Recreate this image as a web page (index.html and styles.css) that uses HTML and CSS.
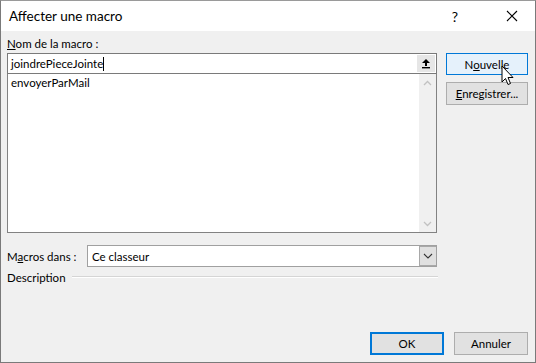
FILE: index.html
```html
<!DOCTYPE html>
<html lang="fr">
<head>
    <meta charset="UTF-8">
    <title>Affecter une macro</title>
    <link rel="stylesheet" href="styles.css">
</head>
<body>
    <div class="window">
        <div class="titlebar">
            <div class="title">Affecter une macro</div>
            <div class="help">?</div>
            <div class="close">
                <svg width="12" height="12" viewBox="0 0 12 12"><path d="M1 1 L11 11 M11 1 L1 11" stroke="#000" stroke-width="1.1" fill="none"/></svg>
            </div>
        </div>

        <div class="content">
            <div class="top">
                <!-- left column: name + list -->
                <div class="left">
                    <div class="label"><u>N</u>om de la macro :</div>
                    <div class="namebox">
                        <span class="nametext">joindrePieceJointe</span><span class="caret"></span>
                        <div class="upbtn">
                            <svg width="10" height="11" viewBox="0 0 10 11"><path d="M5 1 L1 5 L4 5 L4 8 L6 8 L6 5 L9 5 Z" fill="#000"/><rect x="1" y="9" width="8" height="1.4" fill="#000"/></svg>
                        </div>
                    </div>
                    <div class="list">
                        <div class="items">
                            <div class="item">envoyerParMail</div>
                        </div>
                        <div class="scrollbar">
                            <svg width="9" height="6" viewBox="0 0 9 6"><path d="M1 5 L4.5 1.5 L8 5" stroke="#c2c2c2" stroke-width="1.3" fill="none"/></svg>
                            <svg width="9" height="6" viewBox="0 0 9 6"><path d="M1 1 L4.5 4.5 L8 1" stroke="#c2c2c2" stroke-width="1.3" fill="none"/></svg>
                        </div>
                    </div>
                </div>

                <!-- right column: action buttons -->
                <div class="right">
                    <button class="btn btn-hover">N<u>o</u>uvelle</button>
                    <button class="btn"><u>E</u>nregistrer...</button>
                </div>
            </div>

            <div class="row-macros">
                <div class="label-inline">M<u>a</u>cros dans :</div>
                <div class="select">
                    <span class="selecttext">Ce classeur</span>
                    <div class="dropbtn">
                        <svg width="10" height="6" viewBox="0 0 10 6"><path d="M1 1 L5 5 L9 1" stroke="#333" stroke-width="1.1" fill="none"/></svg>
                    </div>
                </div>
            </div>

            <div class="row-desc">
                <span>Description</span>
                <div class="rule"></div>
            </div>

            <div class="footer">
                <button class="btn btn-default">OK</button>
                <button class="btn">Annuler</button>
            </div>
        </div>

        <svg class="cursor" width="14" height="22" viewBox="0 0 14 22">
            <path d="M1 1 L1 17 L4.5 13.5 L7 19.5 L9.5 18.5 L7 12.5 L12 12.5 Z" fill="#fff" stroke="#000" stroke-width="1" stroke-linejoin="round"/>
        </svg>
    </div>
</body>
</html>
```

FILE: styles.css
```css
body {
    margin: 0;
    font-family: Lato, "Noto Sans", sans-serif;
    font-size: 11.5px;
    color: #000;
}

.window {
    position: relative;
    width: 536px;
    height: 363px;
    box-sizing: border-box;
    border: 1px solid #7a7a7a;
    border-top-color: #9a9a9a;
    background-color: #f0f0f0;
    display: flex;
    flex-direction: column;
}

.titlebar {
    height: 30px;
    background-color: #ffffff;
    display: flex;
    align-items: center;
    padding-left: 8px;
}

.title {
    flex: 1;
    font-size: 13.5px;
}

.help {
    width: 46px;
    text-align: center;
    font-size: 14px;
    margin-right: 11px;
}

.close {
    width: 46px;
    display: flex;
    justify-content: center;
    align-items: center;
}

.content {
    flex: 1;
    padding: 5px 7px 7px 6px;
    display: flex;
    flex-direction: column;
}

.top {
    display: flex;
    gap: 9px;
}

.left {
    width: 430px;
}

.label {
    height: 17px;
    line-height: 16px;
}

.namebox {
    height: 21px;
    box-sizing: border-box;
    border: 1px solid #7a7a7a;
    background-color: #ffffff;
    display: flex;
    align-items: center;
    padding-left: 3px;
}

.caret {
    width: 1px;
    height: 14px;
    background-color: #000;
}

.upbtn {
    margin-left: auto;
    width: 18px;
    height: 17px;
    margin-right: 1px;
    background-color: #e6e6e6;
    display: flex;
    justify-content: center;
    align-items: center;
}

.list {
    height: 159px;
    box-sizing: border-box;
    border: 1px solid #828282;
    border-top: none;
    background-color: #ffffff;
    display: flex;
}

.items {
    flex: 1;
    padding: 1px 3px;
}

.item {
    line-height: 15px;
}

.scrollbar {
    width: 17px;
    background-color: #f0f0f0;
    display: flex;
    flex-direction: column;
    justify-content: space-between;
    align-items: center;
    padding: 6px 0 5px;
}

.right {
    width: 82px;
    display: flex;
    flex-direction: column;
    gap: 7px;
    padding-top: 17px;
}

.btn {
    font-family: inherit;
    font-size: 11.5px;
    height: 23px;
    padding: 0;
    background-color: #e1e1e1;
    border: 1px solid #adadad;
    color: #000;
}

.btn-hover {
    height: 22px;
    background-color: #e5f1fb;
    border-color: #0078d7;
}

.btn-default {
    border: 2px solid #0078d7;
}

.row-macros {
    display: flex;
    align-items: center;
    margin-top: 12px;
}

.label-inline {
    width: 80px;
}

.select {
    width: 350px;
    height: 22px;
    box-sizing: border-box;
    border: 1px solid #a0a0a0;
    background-color: #ffffff;
    display: flex;
    align-items: center;
    padding-left: 4px;
}

.selecttext {
    flex: 1;
}

.dropbtn {
    width: 17px;
    height: 20px;
    background-color: #e0e0e0;
    border: 1px solid #a8a8a8;
    border-right: none;
    box-sizing: border-box;
    display: flex;
    justify-content: center;
    align-items: center;
}

.row-desc {
    display: flex;
    align-items: center;
    gap: 6px;
    margin-top: 1px;
    height: 18px;
}

.rule {
    flex: 1;
    margin-right: 90px;
    height: 1px;
    background-color: #d5d5d5;
    border-bottom: 1px solid #ffffff;
}

.footer {
    margin-top: auto;
    display: flex;
    justify-content: flex-end;
    gap: 10px;
}

.footer .btn {
    width: 74px;
}

.cursor {
    position: absolute;
    left: 500px;
    top: 64px;
}
```
